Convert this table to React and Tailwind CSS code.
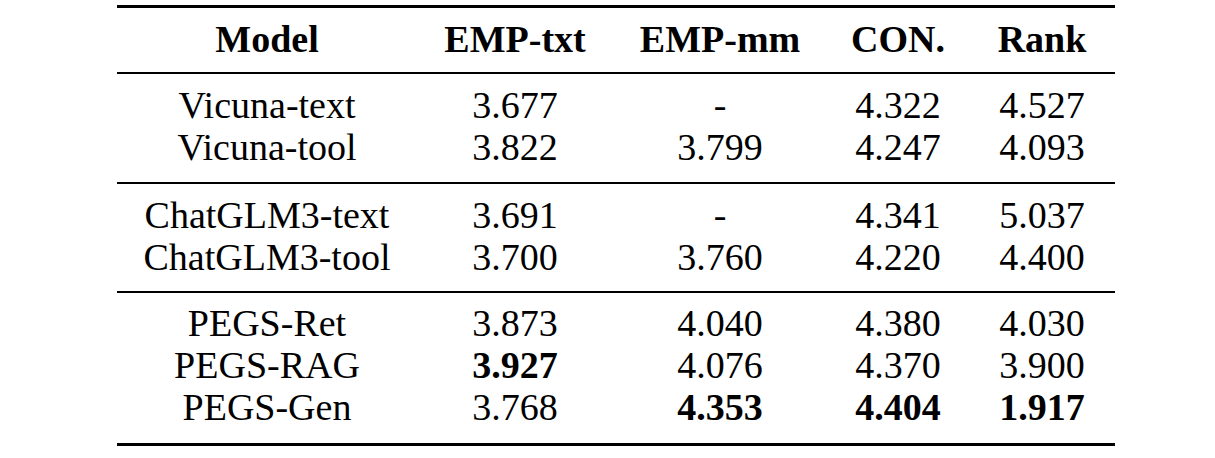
import React from "react";

const groups = [
  [
    ["Vicuna-text", "3.677", "-", "4.322", "4.527"],
    ["Vicuna-tool", "3.822", "3.799", "4.247", "4.093"],
  ],
  [
    ["ChatGLM3-text", "3.691", "-", "4.341", "5.037"],
    ["ChatGLM3-tool", "3.700", "3.760", "4.220", "4.400"],
  ],
  [
    ["PEGS-Ret", "3.873", "4.040", "4.380", "4.030"],
    ["PEGS-RAG", "3.927*", "4.076", "4.370", "3.900"],
    ["PEGS-Gen", "3.768", "4.353*", "4.404*", "1.917*"],
  ],
];

const pads = ["pt-[10px] pb-[14px]", "pt-[10px] pb-[13px]", "pt-[9px] pb-[15px]"];
const borders = ["border-b-2", "border-b-2", "border-b-[3px]"];

function Row({ cells, bold }) {
  return (
    <div className="grid grid-cols-[300px_196px_214px_142px_146px] h-[42px] leading-[42px]">
      {cells.map((c, i) => {
        const b = bold || c.endsWith("*");
        return (
          <div key={i} className={"text-center whitespace-nowrap " + (b ? "font-bold" : "")}>
            {c.replace("*", "")}
          </div>
        );
      })}
    </div>
  );
}

export default function App() {
  return (
    <div
      className="w-[1215px] h-[458px] bg-white text-black text-[38px] pt-[5px]"
      style={{ fontFamily: '"Liberation Serif", "Times New Roman", serif' }}
    >
      <div className="ml-[117px] w-[998px] border-t-[3px] border-black">
        <div className="pt-[10px] pb-[12px] border-b-2 border-black">
          <Row cells={["Model", "EMP-txt", "EMP-mm", "CON.", "Rank"]} bold />
        </div>
        {groups.map((g, gi) => (
          <div key={gi} className={pads[gi] + " " + borders[gi] + " border-black"}>
            {g.map((r, ri) => (
              <Row key={ri} cells={r} />
            ))}
          </div>
        ))}
      </div>
    </div>
  );
}
